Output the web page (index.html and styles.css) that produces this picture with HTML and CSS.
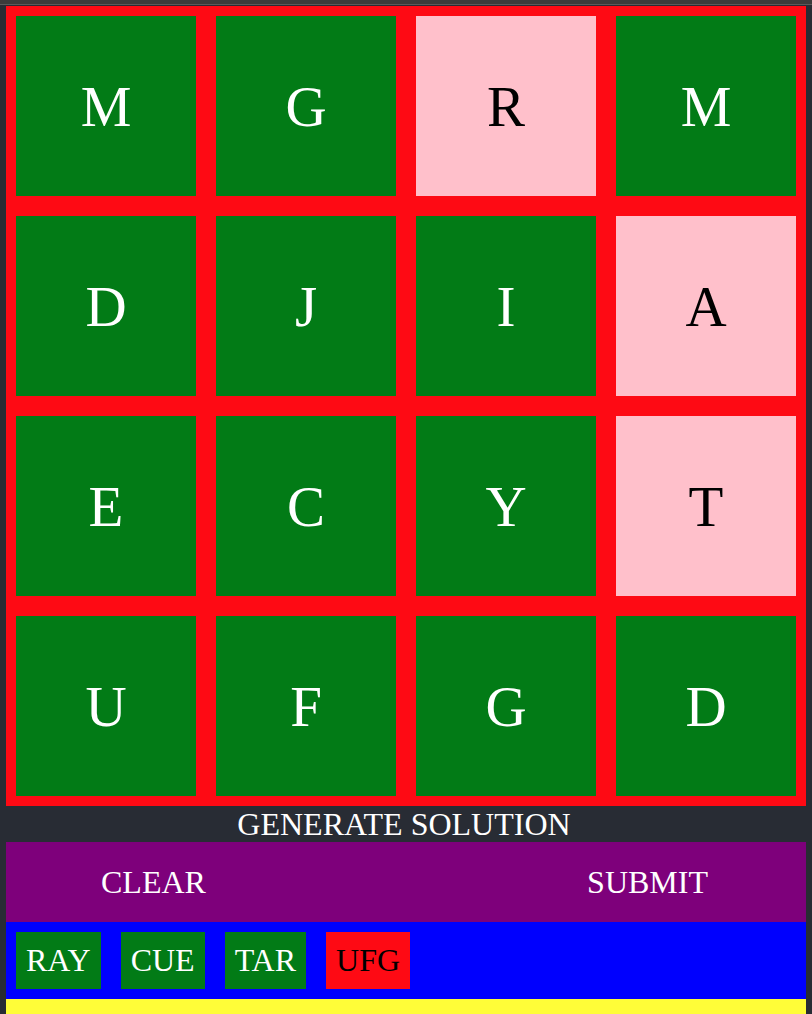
FILE: index.html
```html
<!DOCTYPE html>
<html>
<head>
<meta charset="utf-8">
<link rel="stylesheet" href="styles.css">
</head>
<body>
<div class="topstrip"></div>
<div class="app">
  <div class="board">
    <div class="cell">M</div>
    <div class="cell">G</div>
    <div class="cell picked">R</div>
    <div class="cell">M</div>
    <div class="cell">D</div>
    <div class="cell">J</div>
    <div class="cell">I</div>
    <div class="cell picked">A</div>
    <div class="cell">E</div>
    <div class="cell">C</div>
    <div class="cell">Y</div>
    <div class="cell picked">T</div>
    <div class="cell">U</div>
    <div class="cell">F</div>
    <div class="cell">G</div>
    <div class="cell">D</div>
  </div>
  <div class="generate">GENERATE SOLUTION</div>
  <div class="actions">
    <div class="action">CLEAR</div>
    <div class="action">SUBMIT</div>
  </div>
  <div class="words">
    <div class="word">RAY</div>
    <div class="word">CUE</div>
    <div class="word">TAR</div>
    <div class="word bad">UFG</div>
  </div>
  <div class="footer"></div>
</div>
</body>
</html>
```
FILE: styles.css
```css
html, body {
  margin: 0;
  padding: 0;
  background: #282c34;
  font-family: "Liberation Serif", "Times New Roman", serif;
  color: #ffffff;
}
.topstrip {
  height: 4px;
  background: #3b3b3b;
  border-bottom: 1px solid #5a5a5a;
  margin-bottom: 1px;
}
.app {
  padding: 0 6px;
}
.board {
  background: #fe0a14;
  padding: 10px;
  display: grid;
  grid-template-columns: repeat(4, 180px);
  grid-auto-rows: 180px;
  gap: 20px;
}
.cell {
  background: #027b16;
  color: #ffffff;
  font-size: 57px;
  display: flex;
  align-items: center;
  justify-content: center;
}
.cell.picked {
  background: #ffc0cb;
  color: #000000;
}
.generate {
  font-size: 32px;
  text-align: center;
  height: 36px;
  line-height: 36px;
  padding-right: 4px;
}
.actions {
  background: #7e007b;
  height: 80px;
  display: flex;
  align-items: center;
  justify-content: space-between;
  padding: 0 98px 0 95px;
  font-size: 32px;
}
.words {
  background: #0000fe;
  padding: 10px;
  display: flex;
  gap: 20px;
}
.word {
  background: #027b16;
  color: #ffffff;
  font-size: 32px;
  padding: 10px;
}
.word.bad {
  background: #fe0a14;
  color: #000000;
}
.footer {
  background: #fffd38;
  height: 40px;
}
```
